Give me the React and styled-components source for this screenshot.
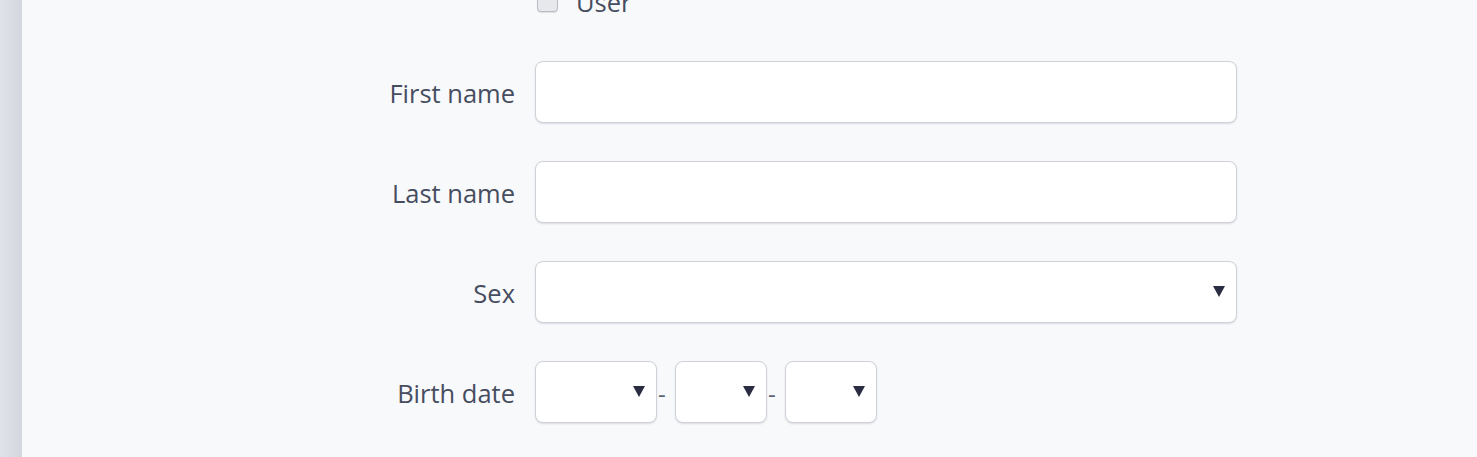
import React from 'react';
import styled, {createGlobalStyle} from 'styled-components';

const GlobalStyle = createGlobalStyle`
    html, body {
        margin: 0;
        padding: 0;
        background: #f8f9fb;
    }
    body {
        font-family: "Open Sans", "Noto Sans", "Liberation Sans", sans-serif;
        color: #474d60;
    }
`;

const Page = styled.div`
    display: flex;
    height: 457px;
    overflow: hidden;
`;

const SideBar = styled.div`
    width: 22px;
    flex-shrink: 0;
    background: linear-gradient(to right, #e0e4ea, #d3d7dd);
`;

const Main = styled.main`
    flex: 1;
    background: #f8f9fb;
`;

const Form = styled.form`
    margin-top: -17px;
    display: flex;
    flex-direction: column;
`;

const Row = styled.div`
    display: flex;
    align-items: ${p => (p.top ? 'flex-start' : 'center')};
    height: ${p => (p.top ? 'auto' : '62px')};
    margin-bottom: ${p => p.gap || 38}px;
`;

const Label = styled.label`
    width: 493px;
    padding-right: 20px;
    padding-top: 2px;
    text-align: right;
    font-size: 25.5px;
    line-height: 36px;
    flex-shrink: 0;
    color: #474d60;
`;

const Field = styled.div`
    display: flex;
    align-items: center;
`;

const CheckBox = styled.span`
    display: inline-block;
    width: 19px;
    height: 19px;
    margin-left: 2px;
    border: 1px solid #b9bcc4;
    border-radius: 4px;
    background: #e6e8ec;
    box-shadow: 0 1px 1px rgba(0, 0, 0, 0.1);
`;

const CheckText = styled.span`
    margin-left: 18px;
    margin-top: 1px;
    font-size: 25.5px;
    line-height: 36px;
    color: #474d60;
`;

const TextInput = styled.input`
    box-sizing: border-box;
    width: 702px;
    height: 62px;
    padding: 0 14px;
    border: 1.5px solid #d0d2d9;
    border-radius: 8px;
    background: #fff;
    box-shadow: 0 1px 2px rgba(30, 35, 60, 0.14);
    font: inherit;
    font-size: 22px;
    outline: none;
`;

const SelectWrap = styled.div`
    position: relative;
    width: ${p => p.width}px;
    height: 62px;
`;

const NativeSelect = styled.select`
    appearance: none;
    box-sizing: border-box;
    width: 100%;
    height: 100%;
    padding: 0 30px 0 14px;
    border: 1.5px solid #d0d2d9;
    border-radius: 8px;
    background: #fff;
    box-shadow: 0 1px 2px rgba(30, 35, 60, 0.14);
    font: inherit;
    font-size: 22px;
    color: #474d60;
    outline: none;
`;

const Arrow = styled.svg`
    position: absolute;
    right: 12px;
    top: 25px;
    width: 12px;
    height: 11px;
    pointer-events: none;
`;

const Dash = styled.span`
    width: 17px;
    padding-left: 1px;
    font-size: 24px;
    line-height: 36px;
    margin-top: 4px;
    color: #5a6072;
`;

const Select = ({width = 702}) => (
    <SelectWrap width={width}>
        <NativeSelect defaultValue="">
            <option value=""></option>
        </NativeSelect>
        <Arrow viewBox="0 0 12 11">
            <polygon points="0,0 12,0 6,11" fill="#2a2d42"/>
        </Arrow>
    </SelectWrap>
);

export default function App() {
    return (
        <>
            <GlobalStyle/>
            <Page>
                <SideBar/>
                <Main>
                    <Form onSubmit={e => e.preventDefault()}>
                        <Row top gap={41}>
                            <Label as="span"/>
                            <Field>
                                <CheckBox/>
                                <CheckText>User</CheckText>
                            </Field>
                        </Row>
                        <Row>
                            <Label>First name</Label>
                            <TextInput type="text"/>
                        </Row>
                        <Row>
                            <Label>Last name</Label>
                            <TextInput type="text"/>
                        </Row>
                        <Row>
                            <Label>Sex</Label>
                            <Select/>
                        </Row>
                        <Row>
                            <Label>Birth date</Label>
                            <Field>
                                <Select width={122}/>
                                <Dash>-</Dash>
                                <Select width={92}/>
                                <Dash>-</Dash>
                                <Select width={92}/>
                            </Field>
                        </Row>
                    </Form>
                </Main>
            </Page>
        </>
    );
}
